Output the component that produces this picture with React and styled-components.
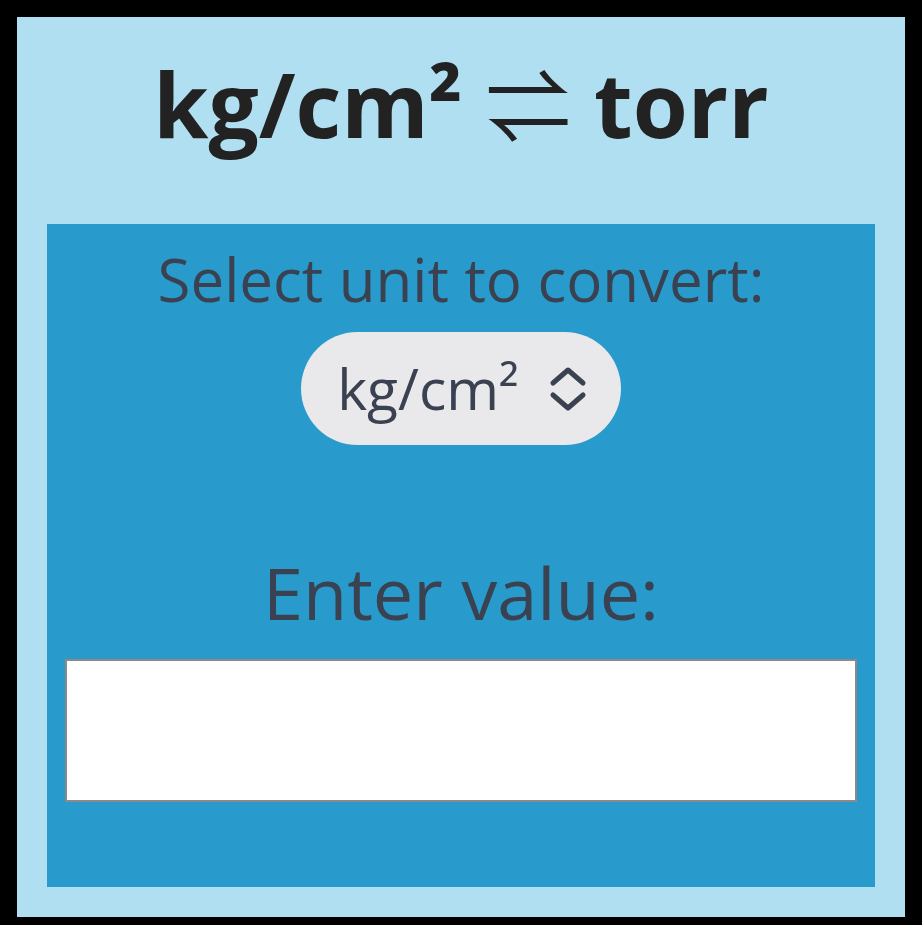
import { createGlobalStyle, styled } from "styled-components";

const GlobalStyle = createGlobalStyle`
body {
    margin: 0;
    font-family: "Open Sans", "Noto Sans", sans-serif;
}
`

const FrameDiv = styled.div`
box-sizing: border-box;
width: 922px;
border: 17px solid #000;
background-color: #b0dff2;
padding: 0 30px 30px;
`

const TitleH1 = styled.h1`
margin: 0;
padding: 42px 0 76px;
font-size: 89px;
line-height: 1;
font-weight: 700;
text-align: center;
color: #222;
`

const ArrowSpan = styled.span`
font-family: "Noto Sans CJK JP", "DejaVu Sans", sans-serif;
font-weight: 400;
font-size: 0.96em;
line-height: 0;
`

const PanelDiv = styled.div`
display: flex;
flex-direction: column;
align-items: center;
background-color: #289bcc;
padding: 25px 18px 85px;
`

const LabelP = styled.p`
margin: ${({ $gap }) => $gap || "0"};
font-size: ${({ $size }) => $size};
line-height: 1;
color: #3a4150;
`

const SelectButton = styled.div`
display: flex;
align-items: center;
gap: 30px;
height: 113px;
box-sizing: border-box;
padding: 0 34px 0 36px;
border-radius: 57px;
background-color: #e9e9ec;
color: #3a4150;
font-size: 57px;
line-height: 1;
margin-top: 23px;
`

const ValueInput = styled.input`
box-sizing: border-box;
width: 100%;
height: 143px;
margin-top: 31px;
border: 2px solid #8a8a8a;
background: #fff;
font-size: 48px;
`

const ChevronsIcon = () => (
    <svg width="38" height="46" viewBox="0 0 38 46" fill="none" stroke="#3a4150" strokeWidth="5" strokeLinecap="round" strokeLinejoin="round">
        <path d="M4 17 L19 4 L34 17" />
        <path d="M4 29 L19 42 L34 29" />
    </svg>
)

export default function App() {
    return (
        <>
            <GlobalStyle />
            <FrameDiv>
                <TitleH1>kg/cm² <ArrowSpan>⇌</ArrowSpan> torr</TitleH1>
                <PanelDiv>
                    <LabelP $size="60px">Select unit to convert:</LabelP>
                    <SelectButton>
                        <span>kg/cm²</span>
                        <ChevronsIcon />
                    </SelectButton>
                    <LabelP $size="72px" $gap="111px 0 0">Enter value:</LabelP>
                    <ValueInput type="text" />
                </PanelDiv>
            </FrameDiv>
        </>
    )
}
